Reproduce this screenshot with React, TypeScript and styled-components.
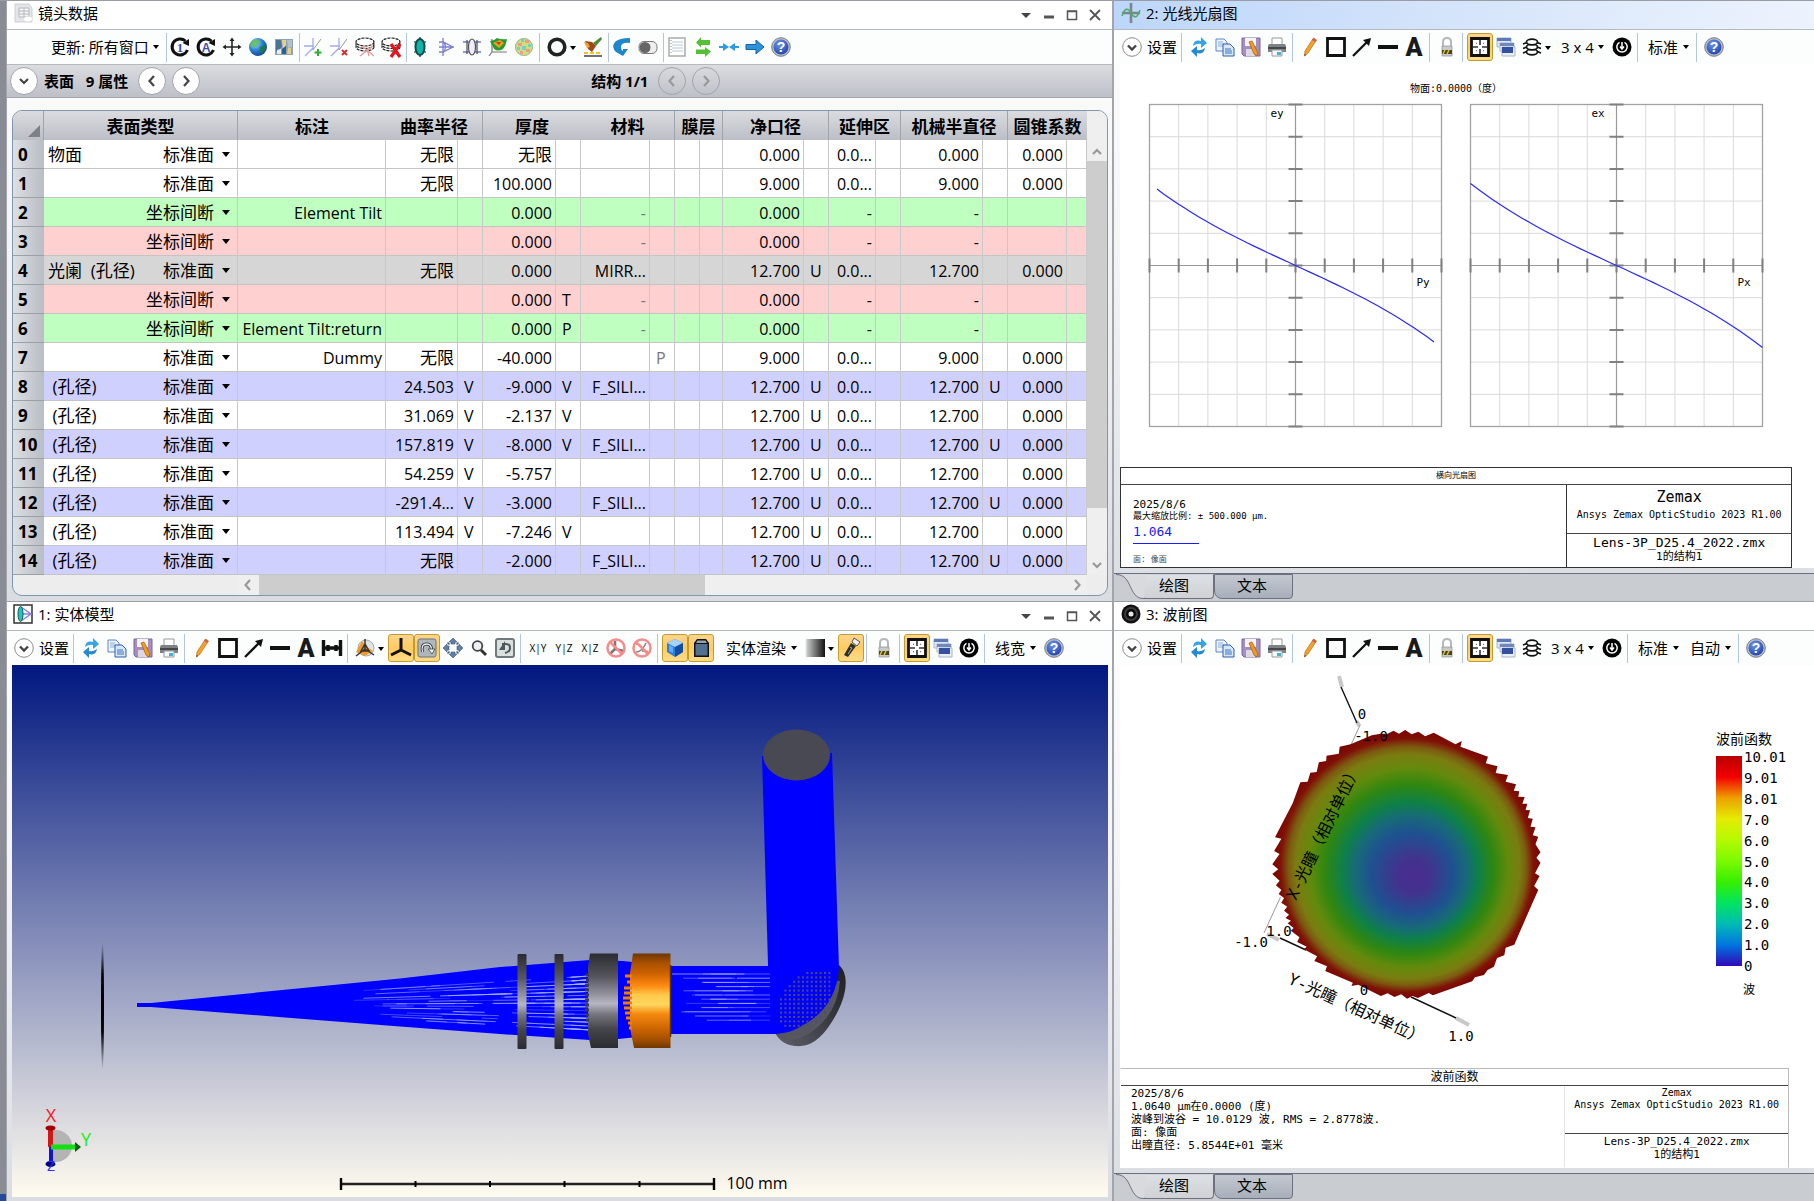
import React, { ReactNode } from "react";
import styled, { createGlobalStyle, css } from "styled-components";

const UI = '"Open Sans", "Noto Sans CJK SC", sans-serif';
const MONO = '"DejaVu Sans Mono", "Noto Sans CJK SC", monospace';

const GlobalStyle = createGlobalStyle`
  *, *::before, *::after { box-sizing: border-box; }
  body { margin: 0; background: #dfe2e7; font-family: ${UI}; font-size: 15px; line-height: 20px; color: #000; }
  button, select { font: inherit; color: inherit; }
`;

/* ---------- window shell ---------- */

const Desktop = styled.div`
  display: grid;
  grid-template-columns: 7px minmax(0, 1107fr) minmax(0, 700fr);
  grid-template-rows: auto minmax(0, 1fr);
  min-height: 100vh;
  border-top: 1px solid #9b9da5;
`;

const Strip = styled.div`
  grid-row: 1 / 3;
  background: linear-gradient(to top, #27489a 7px, #898b95 7px);
  border-right: 1px solid #a3a5ad;
`;

const Panel = styled.section<{ $divider?: boolean }>`
  display: flex;
  flex-direction: column;
  min-width: 0;
  background: linear-gradient(#fdfdfd, #f4f5f7 40%, #d9dde2);
  ${(p) => p.$divider && css`border-right: 2px solid #a3a5aa;`}
`;

const TitleBar = styled.header<{ $active?: boolean; $plot?: boolean }>`
  display: flex;
  align-items: center;
  gap: 5px;
  height: 29px;
  flex: none;
  padding: 0 8px 4px ${(p) => (p.$plot ? 7 : 6)}px;
  border-bottom: 1px solid #b6b9be;
  background: ${(p) => (p.$active ? "linear-gradient(100deg, #bcd6fb, #d3e3fa 45%, #edf3fd)" : "#fff")};
`;

const Title = styled.h2`
  margin: 0;
  flex: 1;
  font-size: 15px;
  font-weight: 400;
  line-height: 20px;
`;

const WindowButton = styled.button`
  display: flex;
  width: 23px;
  height: 20px;
  margin: 4px 0 0;
  padding: 0;
  border: 0;
  background: none;
  align-items: center;
  justify-content: center;
`;

const WindowButtons = styled.div`
  display: flex;
  margin-right: -2px;
`;

const Toolbar = styled.div<{ $ruled?: boolean; $inset?: number }>`
  display: flex;
  align-items: center;
  flex: none;
  height: ${(p) => (p.$ruled ? 35 : 34)}px;
  padding-left: ${(p) => p.$inset ?? 7}px;
  background: #fcfdfd;
  border-bottom: ${(p) => (p.$ruled ? "1px solid #b6b9be" : "0")};
  white-space: nowrap;
`;

const Sep = styled.span<{ $tight?: boolean }>`
  width: 1px;
  height: 29px;
  margin: 0 ${(p) => (p.$tight ? 0 : 4)}px 0 2px;
  background: #b3c6dd;
  flex: none;
`;

const IconButton = styled.button<{ $on?: boolean; $menu?: boolean }>`
  position: relative;
  display: flex;
  flex: none;
  align-items: center;
  justify-content: center;
  width: ${(p) => (p.$menu ? 36 : 26)}px;
  height: 28px;
  padding: 0 ${(p) => (p.$menu ? 10 : 0)}px 0 0;
  border: 1px solid ${(p) => (p.$on ? "#c29b29" : "transparent")};
  border-radius: 3px;
  background: ${(p) => (p.$on ? "linear-gradient(#fbd490, #ffcb62 50%, #ffdb8a)" : "none")};
  ${(p) =>
    p.$menu &&
    css`
      &::after {
        content: "";
        position: absolute;
        right: 3px;
        top: 12px;
        border: 3px solid transparent;
        border-top: 4px solid #000;
        border-bottom: 0;
      }
    `}
`;

const AxisButton = styled.button`
  width: 26px;
  height: 28px;
  padding: 0;
  border: 0;
  background: none;
  font-size: 10px;
  line-height: 28px;
  text-align: center;
`;

const SettingsButton = styled.button`
  display: flex;
  align-items: center;
  gap: 5px;
  margin-right: 2px;
  padding: 0;
  border: 0;
  background: none;
`;

const SelectWrap = styled.span<{ $lead?: number; $cell?: boolean }>`
  position: relative;
  display: inline-flex;
  flex: none;
  padding-left: ${(p) => p.$lead ?? 6}px;
  &::after {
    content: "";
    position: absolute;
    right: ${(p) => (p.$cell ? 4 : 5)}px;
    top: ${(p) => (p.$cell ? 10 : 9)}px;
    border: ${(p) => (p.$cell ? 4 : 3)}px solid transparent;
    border-top: ${(p) => (p.$cell ? 5 : 4)}px solid #000;
    border-bottom: 0;
    pointer-events: none;
  }
`;

const Select = styled.select<{ $cell?: boolean }>`
  appearance: none;
  border: 0;
  margin: 0;
  padding: 0 ${(p) => (p.$cell ? 20 : 15)}px 0 0;
  background: none;
  font-size: ${(p) => (p.$cell ? 17 : 15)}px;
  line-height: ${(p) => (p.$cell ? 26 : 22)}px;
`;

const Drop = ({ label, value, lead }: { label: string; value: string; lead?: number }) => (
  <SelectWrap $lead={lead}>
    <Select aria-label={label} defaultValue={value}>
      <option>{value}</option>
    </Select>
  </SelectWrap>
);

/* ---------- icons ---------- */

const blueArrow = "#2b93dc";

const glyphs: Record<string, ReactNode> = {
  cycle1: (
    <>
      <path d="M15.5 4A8 8 0 1 0 17.5 13" fill="none" stroke="#111" strokeWidth="3" />
      <path d="M12.500 6l6.500-4v7z" fill="#111" />
      <text x="10" y="14.500" fontSize="13" fontWeight="700" textAnchor="middle" fill="#3d4fa8" fontFamily="Liberation Serif">1</text>
    </>
  ),
  cycleA: (
    <>
      <path d="M15.5 4A8 8 0 1 0 17.5 13" fill="none" stroke="#111" strokeWidth="3" />
      <path d="M12.500 6l6.500-4v7z" fill="#111" />
      <text x="10" y="14.500" fontSize="12" fontWeight="700" textAnchor="middle" fill="#3d4fa8" fontFamily="Liberation Sans">A</text>
    </>
  ),
  cross: (
    <path d="M9.200 4H7.500L10 .5 12.500 4h-1.700v5.200H16V7.500l3.500 2.500-3.500 2.500v-1.700h-5.200V16h1.700L10 19.500 7.500 16h1.700v-5.200H4v1.700L.5 10 4 7.500v1.700h5.200z" fill="#222" />
  ),
  globe: (
    <>
      <circle cx="10" cy="10" r="9" fill="url(#globeFill)" />
      <path d="M4 4q5-3 8 0l-2 4-5 3-3-2z" fill="#62c05a" opacity=".85" />
      <path d="M12 10l5-2 1 4-4 5-2-3z" fill="#1d7a3d" opacity=".8" />
    </>
  ),
  map: (
    <>
      <path d="M1 2h18v16H1z" fill="#8ba3b5" />
      <path d="M2 3h5l1 7-6 5z" fill="#4a7396" />
      <path d="M8 3h4v5l-3 4zM14 11h3v6h-4z" fill="#e6d08a" />
      <path d="M13 3h5v7l-4 1z" fill="#b4c0c6" />
      <path d="M3 13l4-1v5H3z" fill="#e9edf0" />
      <path d="M8 12l4-3v8H8z" fill="#2f5f86" />
    </>
  ),
  axisAdd: (
    <>
      <path d="M10 1v12M1 9h10M10 11l-8 8" stroke="#a7a9ee" strokeWidth="1.3" fill="none" />
      <path d="M10 13L18 2" stroke="#999" strokeWidth="1" />
      <path d="M15 12v7M11.500 15.500h7" stroke="#2fae35" strokeWidth="2" />
    </>
  ),
  axisDel: (
    <>
      <path d="M10 1v12M1 9h10M10 11l-8 8" stroke="#a7a9ee" strokeWidth="1.3" fill="none" />
      <path d="M10 13L18 2" stroke="#999" strokeWidth="1" />
      <path d="M13 13l5 5M18 13l-5 5" stroke="#c33" strokeWidth="2" />
    </>
  ),
  stackRays: (
    <>
      <g fill="#fff" stroke="#222" strokeWidth="1.200" strokeDasharray="3 1">
        <ellipse cx="10" cy="10" rx="9" ry="4" />
        <ellipse cx="10" cy="7.500" rx="9" ry="4" />
        <ellipse cx="10" cy="5" rx="9" ry="4" />
      </g>
      <path d="M7 9l12 10M18 9L5 19M12 12l2 7" stroke="#e79a9a" strokeWidth="1.300" />
    </>
  ),
  stackDel: (
    <>
      <g fill="#fff" stroke="#222" strokeWidth="1.200" strokeDasharray="3 1">
        <ellipse cx="10" cy="10" rx="9" ry="4" />
        <ellipse cx="10" cy="7.500" rx="9" ry="4" />
        <ellipse cx="10" cy="5" rx="9" ry="4" />
      </g>
      <path d="M10 7l9 13M19 7l-9 13" stroke="#e3141b" strokeWidth="3.200" />
    </>
  ),
  lensSolid: (
    <>
      <path d="M10 0v20M4 5h3v10H4M16 5h-3M13 15h3" stroke="#222" strokeWidth="1.200" fill="none" />
      <ellipse cx="10" cy="10" rx="4.500" ry="8" fill="#10b5a8" stroke="#0c4c48" strokeWidth="2" />
    </>
  ),
  lensRays: (
    <path d="M7 1v18M3 5h4l10 5-10 5H3M3 10h15M7 4q5 6 0 12" fill="none" stroke="#7b7fd0" strokeWidth="1.300" />
  ),
  lensFrame: (
    <>
      <path d="M1 5h18M1 15h18" stroke="#7078c4" strokeWidth="1.500" />
      <ellipse cx="10" cy="10" rx="3.500" ry="8" fill="#eef" stroke="#555" strokeWidth="1.200" />
      <path d="M5 3v14M15 3v14" stroke="#555" strokeWidth="1.300" />
    </>
  ),
  surface3d: (
    <>
      <path d="M4 2v13h15M4 15l-3 4" stroke="#777" strokeWidth="1.200" fill="none" />
      <path d="M2 4q4 0 7-3 4 2 10 1-1 7-4 10-5 3-9 0z" fill="#2c9a32" />
      <path d="M5 6l7-3 4 3-5 5z" fill="#e0a51c" />
      <path d="M8 5l5 0-2 3z" fill="#d6331c" />
    </>
  ),
  spot: (
    <>
      <circle cx="10" cy="10" r="9" fill="#cfe07a" />
      <path d="M4 6h4v3H4zM11 3h4v3h-4zM12 12h4v3h-4zM6 14h3v3H6z" fill="#f09a8e" />
      <path d="M8 9h4v4H8zM3 10h3v3H3zM14 7h3v3h-3zM7 2h3v3H7z" fill="#78cfc3" />
      <circle cx="10" cy="10" r="8.500" fill="none" stroke="#9db89a" />
    </>
  ),
  ring: <circle cx="10" cy="10" r="7.800" fill="none" stroke="#222" strokeWidth="3.600" />,
  brush: (
    <>
      <path d="M18 0l-8 6 3 3 6-7z" fill="#4f8a35" />
      <path d="M2 4l7 1 4 4-4 6-4-3z" fill="#9a4a18" />
      <path d="M1 5l4 1 2 4-3 1z" fill="#f0a13a" />
      <path d="M1 16h18" stroke="#f1c232" strokeWidth="2" strokeDasharray="4 2" />
      <path d="M1 19h18" stroke="#222" strokeWidth="1.300" />
    </>
  ),
  undo: <path d="M18 1v5q-9-1-9 4 0 3 2 4v-2h5l-5 7-7-4q-5-5-1-10 4-4 15-4z" fill="#1f86c9" />,
  toggle: (
    <>
      <rect x="1" y="4.500" width="18" height="12" rx="5" fill="#eee" stroke="#777" />
      <circle cx="7" cy="10.500" r="5.500" fill="#666" />
    </>
  ),
  sheet: (
    <>
      <path d="M2 1h16v18H2z" fill="#fff" stroke="#aaa" strokeWidth="1.500" />
      <path d="M5 5h11M5 8h11M5 11h11M5 14h11" stroke="#b9c6d8" />
      <path d="M4 3v14" stroke="#888" strokeDasharray="1 2" />
    </>
  ),
  swap: (
    <path d="M8 0v3h9v5H8v2.500L3 5.500zM12 10v2.500H3v4.500h9v3l6-5.500z" fill="#55bf35" />
  ),
  inward: (
    <path d="M0 9h4V6l6 4-6 4v-3H0zM20 9h-4V6l-6 4 6 4v-3h4z" fill="#2b9be8" />
  ),
  right: <path d="M1 7.500h10V3l8 7-8 7v-4.500H1z" fill={blueArrow} stroke="#1463a5" />,
  help: (
    <>
      <circle cx="10" cy="10" r="9.300" fill="#b8bdc8" stroke="#777c88" />
      <circle cx="10" cy="10" r="7.500" fill="url(#helpFill)" />
      <text x="10" y="15" fontSize="14" fontWeight="700" textAnchor="middle" fill="#fff" fontFamily="Liberation Sans">?</text>
    </>
  ),
  refresh: (
    <>
      <path d="M4 9Q5 2 12 4V0l6 6-6 5V7Q8 6 4 9z" fill="#35a3e4" />
      <path d="M16 11q-1 7-8 5v4l-6-6 6-5v4q4 1 8-2z" fill="#2389d4" />
    </>
  ),
  copy: (
    <>
      <path d="M1 2h8l3 3v9H1z" fill="#eef4fd" stroke="#5b86c4" />
      <path d="M3 5h5M3 7h6M3 9h6" stroke="#8db0de" />
      <path d="M8 7h7l4 4v8H8z" fill="#d8e6fa" stroke="#2c5fae" />
      <path d="M10 12h6M10 14h7M10 16h7" stroke="#3f74bf" />
    </>
  ),
  save: (
    <>
      <path d="M1 1h18v18H3l-2-2z" fill="#a58fc0" stroke="#7b679b" />
      <path d="M4 1h11v8H4z" fill="#f5f2f8" />
      <path d="M5 12h9v7H5z" fill="#ddd8e4" />
      <path d="M8 5l3-1 6 12-1 3-3-2z" fill="#f39a1e" stroke="#9b5d10" strokeWidth=".7" />
    </>
  ),
  print: (
    <>
      <path d="M5 1h10v7H5z" fill="#fff" stroke="#999" />
      <path d="M2 7h16l1 2v6H1V9z" fill="#7d8286" />
      <path d="M1 11h18" stroke="#45494c" strokeWidth="2" />
      <path d="M5 13h10v6H5z" fill="#f5fafd" stroke="#999" />
      <path d="M10 15h4v3h-4z" fill="#4fb0c9" />
    </>
  ),
  pencil: (
    <>
      <path d="M13.500 1l3 2L8 16l-3.500 3 .5-5z" fill="#f5a22b" stroke="#b06b14" strokeWidth=".7" />
      <path d="M13.500 1l3 2-1.500 2-3-2z" fill="#d65f4b" />
      <path d="M4.500 19l.3-2 1.200 1z" fill="#333" />
    </>
  ),
  rect: <path d="M1.500 1.500h17v17h-17z" fill="#fff" stroke="#111" strokeWidth="2.800" />,
  arrow: (
    <>
      <path d="M1 19L16 4" stroke="#111" strokeWidth="2.300" />
      <path d="M11 3l8-2-2 8z" fill="#111" />
    </>
  ),
  line: <path d="M0 10h20" stroke="#111" strokeWidth="4" />,
  letter: <text x="10" y="18.500" fontSize="25" fontWeight="900" textAnchor="middle" fill="#1a1a1a" fontFamily="Roboto">A</text>,
  measure: <path d="M1.500 2v16M18.500 2v16M2 10h16M6 7v6M14 7v6" stroke="#111" strokeWidth="3.400" />,
  orbit: (
    <>
      <circle cx="11" cy="10" r="8" fill="#e2e2e2" stroke="#aaa" />
      <path d="M1 14L7 3l5 6 6 4-8 5z" fill="#ef9b2c" />
      <path d="M10 1v10l-9 7M10 11l9 6M6 13l4-7 4 7z" stroke="#333" strokeWidth="1.500" fill="none" />
    </>
  ),
  triad: <path d="M10 0v12M10 12L0 17M10 12l10 5" stroke="#111" strokeWidth="3" />,
  rotate: (
    <>
      <rect x="1" y="1" width="18" height="18" rx="2" fill="#aeb8bb" stroke="#6a757a" />
      <path d="M5.500 14q-2-8 4.500-8 4.500 0 4.500 6" fill="none" stroke="#333" strokeWidth="3" />
      <path d="M5.500 14q-2-8 4.500-8 4.500 0 4.500 6" fill="none" stroke="#e8eef0" strokeWidth="1.300" />
      <path d="M11 11h7l-3 5z" fill="#e8eef0" stroke="#444" strokeWidth=".8" />
    </>
  ),
  move: (
    <g fill="#5f7fa3" stroke="#3e5a78" strokeWidth=".6">
      <path d="M10 0l4 4h-2v2H8V4H6zM10 20l4-4h-2v-2H8v2H6zM0 10l4-4v2h2v4H4v2zM20 10l-4-4v2h-2v4h2v2z" />
      <path d="M4.500 4.500l2 2M15.500 4.500l-2 2M4.500 15.500l2-2M15.500 15.500l-2-2" strokeWidth="1.500" />
    </g>
  ),
  search: (
    <>
      <circle cx="8.500" cy="8" r="4.800" fill="#eef1f4" stroke="#444" strokeWidth="1.800" />
      <path d="M12 12l5 5" stroke="#333" strokeWidth="3" />
    </>
  ),
  reset: (
    <>
      <rect x="1" y="1" width="18" height="18" rx="2" fill="#dbe0df" stroke="#6f7a7c" strokeWidth="2" />
      <path d="M7 6h4q4 0 4 4t-5 5" fill="none" stroke="#4c5a5e" strokeWidth="2" />
      <path d="M10 3v9H4z" fill="#4c5a5e" />
    </>
  ),
  noAxis: (
    <>
      <path d="M9 3v8l-5 5M9 11l9 2" stroke="#777" strokeWidth="2.600" fill="none" />
      <circle cx="10" cy="10" r="8.500" fill="none" stroke="#f78c8c" strokeWidth="2.500" />
      <path d="M4 4l12 12" stroke="#f78c8c" strokeWidth="2.500" />
    </>
  ),
  noRays: (
    <>
      <path d="M4 6q6 0 7 8M4 14q6 0 10-9M12 12l4 2" stroke="#888" strokeWidth="1.600" fill="none" />
      <circle cx="10" cy="10" r="8.500" fill="none" stroke="#f78c8c" strokeWidth="2.500" />
      <path d="M4 4l12 12" stroke="#f78c8c" strokeWidth="2.500" />
    </>
  ),
  cube: (
    <>
      <path d="M10 1l8 4v9l-8 5-8-5V5z" fill="#2b7fe0" />
      <path d="M10 1l8 4-8 4-8-4z" fill="#a7d2fa" />
      <path d="M10 9l8-4v9l-8 5z" fill="#124f9e" />
      <path d="M4 7l4 2v6l-4-2z" fill="#64abf3" />
    </>
  ),
  cylinder: (
    <>
      <path d="M3 5l3-4h9l3 4v14H3z" fill="#111" />
      <path d="M4.500 6h12v11.500h-12z" fill="#52708f" />
      <path d="M6.500 2.500h8l1.500 2.500H5z" fill="#8fa5ba" />
    </>
  ),
  gradient: <rect x="0" y="1" width="20" height="18" fill="url(#swatchFill)" />,
  torch: (
    <>
      <path d="M13 0l6 4-3 4-5-4z" fill="#eef0f0" stroke="#555" />
      <path d="M10 5l5 3-8 11-4-2z" fill="#2d2d2d" />
      <path d="M9 9l2 1-4 6" stroke="#aaa" fill="none" />
    </>
  ),
  lock: (
    <>
      <path d="M6 10V5q0-4 4-4t4 4v5" fill="none" stroke="#b5b9bc" strokeWidth="2" />
      <path d="M5 9h10v10H5z" fill="#c5cacd" stroke="#999" strokeWidth=".8" />
      <path d="M5 13h10v4H5z" fill="#4a4320" />
      <path d="M6 17l2-4M10 17l2-4" stroke="#e6c32a" strokeWidth="1.500" />
    </>
  ),
  fit: (
    <>
      <path d="M1.500 1.500h17v17h-17z" fill="#fff" stroke="#111" strokeWidth="2.800" />
      <path d="M10 3v5M10 12v5M3 10h5M12 10h5" stroke="#333" strokeWidth="1.600" fill="none" />
      <path d="M6.500 7V6H7M13.500 7V6H13M6.500 13v1H7M13.500 13v1H13" stroke="#777" fill="none" />
    </>
  ),
  windows: (
    <>
      <path d="M1 1h14v9H1z" fill="#dfe6f2" stroke="#a9b6ca" />
      <path d="M1 1h14v3H1z" fill="#5d79b8" />
      <path d="M4 6h14v8H4z" fill="#f1f4fa" stroke="#a9b6ca" />
      <path d="M4 6h14v3H4z" fill="#6f88c0" />
      <path d="M6 10h13v9H6z" fill="#e8edf6" stroke="#a9b6ca" />
      <path d="M6 10h11v6H6z" fill="#3450a2" />
    </>
  ),
  layers: (
    <g fill="#fff" stroke="#111" strokeWidth="1.700">
      <path d="M1 16l5-2M19 16l-5-2M1 11.500l5-2M19 11.500l-5-2M1 7l5-2M19 7l-5-2" />
      <ellipse cx="10" cy="15" rx="5.500" ry="2.800" />
      <ellipse cx="10" cy="10" rx="5.500" ry="2.800" />
      <ellipse cx="10" cy="5" rx="5.500" ry="2.800" />
    </g>
  ),
  clock: (
    <>
      <circle cx="10" cy="10" r="9.500" fill="#000" />
      <path d="M7.500 5.300a5.200 5.200 0 1 0 5 0" fill="none" stroke="#fff" strokeWidth="1.500" />
      <path d="M10 5v6M8 9.500l2 2.500 2-2.500" fill="none" stroke="#fff" strokeWidth="1.500" />
    </>
  ),
  chevron: (
    <>
      <circle cx="10" cy="10" r="9.300" fill="#fff" stroke="#8c8c8c" />
      <path d="M6 8.500l4 4 4-4" fill="none" stroke="#444" strokeWidth="2.400" />
    </>
  ),
  doc: (
    <>
      <path d="M2 1h14l3 4v14H2z" fill="#e3e5e8" stroke="#cdd0d4" />
      <path d="M6 5h10v9H6zM6 8h10M6 11h10M11 5v9" fill="#f4f5f6" stroke="#b5b9be" />
      <ellipse cx="15" cy="16" rx="4" ry="2.500" fill="#fff" />
    </>
  ),
  model: (
    <>
      <path d="M1 1h18v18H1z" fill="#fff" stroke="#333" strokeWidth="1.500" />
      <path d="M8 3l10 7-10 7M8 10h10" fill="none" stroke="#8d80e8" strokeWidth="1.500" />
      <ellipse cx="7.500" cy="10" rx="2.500" ry="7.500" fill="#1fc7b9" stroke="#135e5a" />
    </>
  ),
  fan: (
    <>
      <path d="M10 0v20M1 10h18" stroke="#7a8590" strokeWidth="2.600" />
      <path d="M1 13q4-12 9-3t9-3" fill="none" stroke="#4fae5c" strokeWidth="1.500" />
    </>
  ),
  airy: (
    <>
      <circle cx="10" cy="10" r="9.500" fill="#111" />
      <circle cx="10" cy="10" r="7" fill="#3c3c3c" />
      <circle cx="10" cy="10" r="5" fill="#0a0a0a" />
      <circle cx="10" cy="10" r="2.500" fill="#e8e8e8" />
    </>
  ),
};

const Glyph = styled.svg.attrs({ viewBox: "0 0 20 20", "aria-hidden": true })`
  width: 20px;
  height: 20px;
  flex: none;
  overflow: visible;
`;

const SharedDefs = styled.svg`
  position: absolute;
  width: 0;
  height: 0;
`;

const Icon = ({ name, on, menu }: { name: string; on?: boolean; menu?: boolean }) => (
  <IconButton type="button" aria-label={name} $on={on} $menu={menu}>
    <Glyph>{glyphs[name]}</Glyph>
  </IconButton>
);

const Icons = ({ names }: { names: string[] }) => (
  <>{names.map((n) => <Icon key={n} name={n} />)}</>
);

const Settings = () => (
  <SettingsButton type="button">
    <Glyph>{glyphs.chevron}</Glyph>设置
  </SettingsButton>
);

const Controls = () => (
  <WindowButtons>
    <WindowButton type="button" aria-label="menu">
      <svg width="12" height="12"><path d="M1 4h10L6 9z" fill="#444" /></svg>
    </WindowButton>
    <WindowButton type="button" aria-label="minimize">
      <svg width="12" height="12"><path d="M1 8h10" stroke="#555" strokeWidth="3" /></svg>
    </WindowButton>
    <WindowButton type="button" aria-label="maximize">
      <svg width="12" height="12"><path d="M1.500 2h9v8.500h-9zM1 2.500h10" fill="none" stroke="#555" strokeWidth="1.500" /></svg>
    </WindowButton>
    <WindowButton type="button" aria-label="close">
      <svg width="12" height="12"><path d="M1 1l10 10M11 1L1 11" stroke="#555" strokeWidth="1.800" /></svg>
    </WindowButton>
  </WindowButtons>
);

/* ---------- lens data editor ---------- */

const PropertyBar = styled.div`
  display: flex;
  align-items: center;
  flex: none;
  height: 33px;
  padding-left: 3px;
  background: linear-gradient(#dadce0, #bdc0c7);
  border-bottom: 1px solid #a4a7ad;
  font-weight: 700;
`;

const BarText = styled.span<{ $lead?: number }>`
  margin: 0 10px 0 ${(p) => p.$lead ?? 0}px;
  white-space: pre;
`;

const RoundButton = styled.button<{ $muted?: boolean }>`
  display: flex;
  align-items: center;
  justify-content: center;
  width: 28px;
  height: 28px;
  margin-right: 6px;
  padding: 0;
  border: 1px solid #a2a4a9;
  border-radius: 50%;
  background: ${(p) => (p.$muted ? "transparent" : "#fff")};
  color: ${(p) => (p.$muted ? "#999" : "#444")};
`;

const Chevron = ({ d }: { d: string }) => (
  <svg width="12" height="12" viewBox="0 0 12 12" aria-hidden="true">
    <path d={d} fill="none" stroke="currentColor" strokeWidth="2.200" />
  </svg>
);

const EditorBody = styled.div`
  flex: 1;
  padding: 12px 4px 5px 5px;
  background: linear-gradient(#fafafa, #eef0f2 50%, #d9dde2);
  border-bottom: 1px solid #9c9fa6;
`;

const Frame = styled.div`
  border: 1px solid #7d97ae;
  border-radius: 10px;
  overflow: hidden;
  background: #ededed;
`;

const FrameRow = styled.div`
  display: flex;
`;

const Grid = styled.table`
  flex: 1;
  min-width: 0;
  table-layout: fixed;
  border-collapse: separate;
  border-spacing: 0;
  font-size: 16px;
`;

const HeadCell = styled.th<{ $rule?: boolean }>`
  height: 29px;
  padding: 2px 0 0;
  background: linear-gradient(#dadce0, #bbbec5);
  border-right: ${(p) => (p.$rule ? "1px solid #9fa3aa" : "0")};
  font-size: 17px;
  font-weight: 700;
  line-height: 26px;
  white-space: nowrap;
  overflow: hidden;
`;

const CornerCell = styled(HeadCell)`
  text-align: right;
  vertical-align: bottom;
  & svg { display: block; margin: 0 3px 3px auto; }
`;

const RowHead = styled.th`
  height: 29px;
  padding: 2px 0 0 5px;
  background: linear-gradient(90deg, #dcdfe3, #b9bdc4);
  border-bottom: 1px solid #9ca1a8;
  font-size: 17px;
  font-weight: 700;
  line-height: 26px;
  text-align: left;
`;

const tones: Record<string, string> = {
  w: "#ffffff",
  g: "#bfffbf",
  r: "#ffd0d0",
  s: "#d6d6d6",
  b: "#d0d0ff",
};

const Row = styled.tr<{ $tone: string }>`
  background: ${(p) => tones[p.$tone]};
`;

const Cell = styled.td<{ $flag?: boolean; $dim?: boolean; $text?: boolean }>`
  height: 29px;
  padding: 2px ${(p) => (p.$flag ? 0 : 3)}px 0 ${(p) => (p.$flag ? 6 : 0)}px;
  border-right: 1px solid #c9c9c9;
  border-bottom: 1px solid #c4c4c4;
  color: ${(p) => (p.$dim ? "#777" : "#000")};
  font-size: ${(p) => (p.$text ? 17 : 16)}px;
  line-height: 26px;
  text-align: ${(p) => (p.$flag ? "left" : "right")};
  white-space: nowrap;
  overflow: hidden;
`;

const TypeBox = styled.div`
  display: flex;
  justify-content: space-between;
  height: 26px;
  padding-left: 4px;
  font-size: 17px;
  white-space: pre;
`;

const VScroll = styled.div`
  display: flex;
  flex-direction: column;
  align-items: center;
  justify-content: space-between;
  width: 20px;
  flex: none;
  padding: 35px 0 4px;
  color: #999;
  background: linear-gradient(#cdcdcd, #cdcdcd) 0 50px / 20px 347px no-repeat, #efefef;
`;

const HScroll = styled.div`
  display: flex;
  align-items: center;
  justify-content: space-between;
  flex: 1;
  height: 20px;
  margin-left: 225px;
  margin-right: 20px;
  padding: 0 4px;
  color: #999;
  background: linear-gradient(90deg, transparent 21px, #cdcdcd 21px, #cdcdcd 55%, transparent 55%), #efefef;
`;

const widths = [31, 194, 148, 72, 25, 73, 25, 69, 25, 25, 23, 81, 25, 47, 25, 82, 25, 59, 20];

type Surface = [string, string, string, string, string, string, string, string, string, string, string, string, string, string, string];
const std = "标准面";
const brk = "坐标间断";
/* tone, note, type, comment, radius, flag, thickness, flag, material, flag, clear, flag, chip, mechanical, flag */
const surfaces: Surface[] = [
  ["w", "物面", std, "", "无限", "", "无限", "", "", "", "0.000", "", "0.0...", "0.000", ""],
  ["w", "", std, "", "无限", "", "100.000", "", "", "", "9.000", "", "0.0...", "9.000", ""],
  ["g", "", brk, "Element Tilt", "", "", "0.000", "", "-", "", "0.000", "", "-", "-", ""],
  ["r", "", brk, "", "", "", "0.000", "", "-", "", "0.000", "", "-", "-", ""],
  ["s", "光阑  (孔径)", std, "", "无限", "", "0.000", "", "MIRR...", "", "12.700", "U", "0.0...", "12.700", ""],
  ["r", "", brk, "", "", "", "0.000", "T", "-", "", "0.000", "", "-", "-", ""],
  ["g", "", brk, "Element Tilt:return", "", "", "0.000", "P", "-", "", "0.000", "", "-", "-", ""],
  ["w", "", std, "Dummy", "无限", "", "-40.000", "", "", "P", "9.000", "", "0.0...", "9.000", ""],
  ["b", " (孔径)", std, "", "24.503", "V", "-9.000", "V", "F_SILI...", "", "12.700", "U", "0.0...", "12.700", "U"],
  ["w", " (孔径)", std, "", "31.069", "V", "-2.137", "V", "", "", "12.700", "U", "0.0...", "12.700", ""],
  ["b", " (孔径)", std, "", "157.819", "V", "-8.000", "V", "F_SILI...", "", "12.700", "U", "0.0...", "12.700", "U"],
  ["w", " (孔径)", std, "", "54.259", "V", "-5.757", "", "", "", "12.700", "U", "0.0...", "12.700", ""],
  ["b", " (孔径)", std, "", "-291.4...", "V", "-3.000", "", "F_SILI...", "", "12.700", "U", "0.0...", "12.700", "U"],
  ["w", " (孔径)", std, "", "113.494", "V", "-7.246", "V", "", "", "12.700", "U", "0.0...", "12.700", ""],
  ["b", " (孔径)", std, "", "无限", "", "-2.000", "", "F_SILI...", "", "12.700", "U", "0.0...", "12.700", "U"],
];

const isText = (v: string) => v === "无限";

const LensTable = () => (
  <Grid>
    <colgroup>
      {widths.map((w, i) => <col key={i} style={{ width: w }} />)}
    </colgroup>
    <thead>
      <tr>
        <CornerCell $rule>
          <svg width="12" height="12"><path d="M12 0v12H0z" fill="#7d8087" /></svg>
        </CornerCell>
        <HeadCell $rule>表面类型</HeadCell>
        <HeadCell>标注</HeadCell>
        <HeadCell $rule colSpan={2}>曲率半径</HeadCell>
        <HeadCell colSpan={2}>厚度</HeadCell>
        <HeadCell $rule colSpan={2}>材料</HeadCell>
        <HeadCell $rule colSpan={2}>膜层</HeadCell>
        <HeadCell $rule colSpan={2}>净口径</HeadCell>
        <HeadCell $rule colSpan={2}>延伸区</HeadCell>
        <HeadCell $rule colSpan={2}>机械半直径</HeadCell>
        <HeadCell colSpan={2}>圆锥系数</HeadCell>
      </tr>
    </thead>
    <tbody>
      {surfaces.map(([tone, note, type, comment, rad, rf, th, tf, mat, mf, clear, cf, chip, mech, hf], i) => (
        <Row key={i} $tone={tone}>
          <RowHead scope="row">{i}</RowHead>
          <Cell>
            <TypeBox>
              <span>{note}</span>
              <SelectWrap $cell>
                <Select $cell aria-label={`surface ${i} type`} defaultValue={type}>
                  <option>{type}</option>
                </Select>
              </SelectWrap>
            </TypeBox>
          </Cell>
          <Cell>{comment}</Cell>
          <Cell $text={isText(rad)}>{rad}</Cell>
          <Cell $flag>{rf}</Cell>
          <Cell $text={isText(th)}>{th}</Cell>
          <Cell $flag>{tf}</Cell>
          <Cell $dim={mat === "-"}>{mat}</Cell>
          <Cell $flag $dim>{mf}</Cell>
          <Cell />
          <Cell />
          <Cell>{clear}</Cell>
          <Cell $flag>{cf}</Cell>
          <Cell>{chip}</Cell>
          <Cell />
          <Cell>{mech}</Cell>
          <Cell $flag>{hf}</Cell>
          <Cell>{type === brk ? "" : "0.000"}</Cell>
          <Cell />
        </Row>
      ))}
    </tbody>
  </Grid>
);

const LensEditor = () => (
  <Panel $divider>
    <TitleBar>
      <Glyph>{glyphs.doc}</Glyph>
      <Title>镜头数据</Title>
      <Controls />
    </TitleBar>
    <Toolbar $ruled $inset={36}>
      <Drop label="更新" value="更新: 所有窗口" lead={8} />
      <Sep $tight />
      <Icons names={["cycle1", "cycleA", "cross", "globe", "map"]} />
      <Sep $tight />
      <Icons names={["axisAdd", "axisDel", "stackRays", "stackDel"]} />
      <Sep $tight />
      <Icons names={["lensSolid", "lensRays", "lensFrame", "surface3d", "spot"]} />
      <Sep />
      <Icon name="ring" menu />
      <Icon name="brush" />
      <Sep $tight />
      <Icons names={["undo", "toggle"]} />
      <Sep $tight />
      <Icons names={["sheet", "swap", "inward", "right", "help"]} />
    </Toolbar>
    <PropertyBar>
      <RoundButton type="button" aria-label="expand"><Chevron d="M2 4l4 4 4-4" /></RoundButton>
      <BarText>{"表面   9 属性"}</BarText>
      <RoundButton type="button" aria-label="previous surface"><Chevron d="M8 1L3.500 6 8 11" /></RoundButton>
      <RoundButton type="button" aria-label="next surface"><Chevron d="M4 1l4.500 5L4 11" /></RoundButton>
      <BarText $lead={385}>结构 1/1</BarText>
      <RoundButton type="button" $muted aria-label="previous configuration"><Chevron d="M8 1L3.500 6 8 11" /></RoundButton>
      <RoundButton type="button" $muted aria-label="next configuration"><Chevron d="M4 1l4.500 5L4 11" /></RoundButton>
    </PropertyBar>
    <EditorBody>
      <Frame>
        <FrameRow>
          <LensTable />
          <VScroll>
            <Chevron d="M2 8l4-4 4 4" />
            <Chevron d="M2 4l4 4 4-4" />
          </VScroll>
        </FrameRow>
        <FrameRow>
          <HScroll>
            <Chevron d="M8 1L3.500 6 8 11" />
            <Chevron d="M4 1l4.500 5L4 11" />
          </HScroll>
        </FrameRow>
      </Frame>
    </EditorBody>
  </Panel>
);

/* ---------- shaded model ---------- */

const Viewport = styled.div`
  flex: 1;
  display: flex;
  min-height: 0;
  margin: 0 4px 4px 5px;
  background: linear-gradient(#00177f, #fffbef);
`;

const Scene = styled.svg`
  flex: 1;
  width: 100%;
  min-height: 0;
`;

const noise = (i: number) => {
  const v = Math.sin(i * 12.9898) * 43758.5453;
  return v - Math.floor(v);
};

const focus = { x: 125, y: 340 };

/* gaps between rays seen as pale slivers, all aimed at the focus */
const fanGaps = Array.from({ length: 130 }, (_, i) => {
  const slope = -0.064 + 0.0085 * Math.floor(noise(i + 1) * 15);
  const near = noise(i + 50);
  const x1 = 560 - near * near * 220;
  const x2 = Math.min(x1 + 15 + noise(i + 90) * 60, 576);
  return {
    x1,
    x2,
    y1: focus.y + slope * (x1 - focus.x),
    y2: focus.y + slope * (x2 - focus.x),
    o: 0.25 + 0.65 * noise(i + 7),
  };
});

const flatGaps = Array.from({ length: 34 }, (_, i) => {
  const y = 309 + (i % 12) * 4.2;
  const x1 = 660 + noise(i + 3) * 70;
  return { y, x1, x2: Math.min(x1 + 20 + noise(i + 31) * 60, 758), o: 0.25 + 0.6 * noise(i + 17) };
});

const dots: ReactNode[] = [];
for (let r = 0; r < 13; r++) {
  for (let c = 0; c < 12; c++) {
    const x = 768 + c * 4.4;
    const y = 307 + r * 4.4;
    const u = (x - 794) * 0.75 + (y - 334) * 0.66;
    const v = (x - 794) * -0.66 + (y - 334) * 0.75;
    if ((v * v) / (36 * 36) + (u * u) / (23 * 23) < 1) {
      dots.push(<rect key={`${r}-${c}`} x={x} y={y} width="2" height="2" />);
    }
  }
}

const ModelScene = () => (
  <Scene viewBox="0 0 1096 532" preserveAspectRatio="xMidYMid meet" role="img" aria-label="实体模型">
    <defs>
      <linearGradient id="steel" x1="0" y1="0" x2="0" y2="1">
        <stop offset="0" stopColor="#2b2c31" />
        <stop offset=".25" stopColor="#55565e" />
        <stop offset=".42" stopColor="#8e8f99" />
        <stop offset=".53" stopColor="#b6b6c3" />
        <stop offset=".64" stopColor="#77777f" />
        <stop offset=".8" stopColor="#44454b" />
        <stop offset="1" stopColor="#2b2c31" />
      </linearGradient>
      <linearGradient id="amber" x1="0" y1="0" x2="0" y2="1">
        <stop offset="0" stopColor="#6e3800" />
        <stop offset=".1" stopColor="#a85000" />
        <stop offset=".22" stopColor="#d06400" />
        <stop offset=".34" stopColor="#ff8a12" />
        <stop offset=".44" stopColor="#ffca4c" />
        <stop offset=".54" stopColor="#ffd65c" />
        <stop offset=".64" stopColor="#f58a10" />
        <stop offset=".8" stopColor="#cb6400" />
        <stop offset=".93" stopColor="#9a4b00" />
        <stop offset="1" stopColor="#6e3800" />
      </linearGradient>
      <linearGradient id="rim" x1="0" y1="1" x2="1" y2="0">
        <stop offset="0" stopColor="#5e5f68" />
        <stop offset="1" stopColor="#1c1d21" />
      </linearGradient>
      <linearGradient id="sliver" x1="0" y1="0" x2="0" y2="1">
        <stop offset="0" stopColor="#000" stopOpacity="0" />
        <stop offset=".25" stopColor="#000" />
        <stop offset=".7" stopColor="#000" />
        <stop offset="1" stopColor="#000" stopOpacity="0" />
      </linearGradient>
    </defs>

    <ellipse cx="90.500" cy="341" rx="1.500" ry="64" fill="url(#sliver)" />

    <path d="M827 300C838 310 835 332 821 355S795 382 783 381 766 373 763 368z" fill="url(#rim)" />
    <path d="M763 368q10 10 24 6 38-18 41-58l-10 0-50 50z" fill="#555660" />

    <path d="M125 338h14l249-24.500 100-11.500 90-7 33 1 45 5h102l7 68H656l-50 5-28 1-90-6-100-7.500L139 342h-14z" fill="#0000ff" />
    <path d="M750 91l8 278q18 0 28-6 38-18 41-60L820 88z" fill="#0000ff" />
    <ellipse cx="784.500" cy="90" rx="33.500" ry="25.500" fill="#484953" />

    <g strokeWidth=".9">
      {fanGaps.map((g, i) => (
        <line key={i} x1={g.x1} y1={g.y1} x2={g.x2} y2={g.y2} stroke="#a9b4f2" strokeOpacity={g.o} />
      ))}
      {flatGaps.map((g, i) => (
        <line key={i} x1={g.x1} y1={g.y} x2={g.x2} y2={g.y} stroke="#b4bdf0" strokeOpacity={g.o} />
      ))}
    </g>
    <g fill="#4c4d78">{dots}</g>

    <rect x="505.500" y="289" width="9" height="95" rx="1" fill="url(#steel)" />
    <rect x="542.500" y="289" width="9" height="95" rx="1" fill="url(#steel)" />
    <path d="M578 288.500h28v94.500h-27l-3-14V302z" fill="url(#steel)" />
    <path d="M577 310h-3M577 315h-3M577 320h-4M577 325h-4M577 330h-4M577 335h-4M577 340h-4M577 345h-4M577 350h-3M577 355h-3" stroke="#3b3c48" strokeWidth="3" />
    <path d="M621 288.500h37.500v94.500H622l-4-20V308z" fill="url(#amber)" />
    <path d="M620 311h-7M620 317h-5M620 323h-8M620 328h-8M620 333h-9M620 338h-9M620 343h-8M620 348h-7M620 353h-6M620 358h-4M620 363h-3" stroke="#f07c00" strokeWidth="3" />
    <path d="M658.500 300v72" stroke="#5a3200" strokeWidth="1.500" />

    <path d="M44 465a16 16 0 0 1 0 32h-4v-32z" fill="#b4b4b4" />
    <path d="M38.500 482v-20" stroke="#d01818" strokeWidth="5" />
    <ellipse cx="38.500" cy="463" rx="5" ry="2.500" fill="#a80000" />
    <path d="M39 482v16" stroke="#1414c8" strokeWidth="4" />
    <ellipse cx="38.500" cy="499" rx="5" ry="3" fill="#00007c" />
    <path d="M39 482h25" stroke="#11e011" strokeWidth="5" />
    <path d="M63 477l6 5-6 5z" fill="#0a5c0a" />
    <g fontFamily={UI} fontSize="16" textAnchor="middle">
      <text x="39" y="457" fill="#ff1414" fontSize="18">X</text>
      <text x="74" y="481" fill="#14f014" fontSize="18">Y</text>
      <text x="39" y="506" fill="#3030ff" fontSize="14">Z</text>
      <text x="745" y="524" fill="#000">100 mm</text>
    </g>
    <path d="M329 519h373" stroke="#222" strokeWidth="2.400" />
    <path d="M329 513v12M702 513v12" stroke="#000" strokeWidth="2.400" />
    <path d="M403.500 516v6M478 516v6M552.500 516v6M627.500 516v6" stroke="#000" strokeWidth="2" />
  </Scene>
);

const ModelWindow = () => (
  <Panel $divider>
    <TitleBar>
      <Glyph>{glyphs.model}</Glyph>
      <Title>1: 实体模型</Title>
      <Controls />
    </TitleBar>
    <Toolbar>
      <Settings />
      <Sep />
      <Icons names={["refresh", "copy", "save", "print"]} />
      <Sep />
      <Icons names={["pencil", "rect", "arrow", "line", "letter", "measure"]} />
      <Sep />
      <Icon name="orbit" menu />
      <Icon name="triad" on />
      <Icon name="rotate" on />
      <Icons names={["move", "search", "reset"]} />
      <Sep />
      <AxisButton type="button">X|Y</AxisButton>
      <AxisButton type="button">Y|Z</AxisButton>
      <AxisButton type="button">X|Z</AxisButton>
      <Icons names={["noAxis", "noRays"]} />
      <Sep />
      <Icon name="cube" on />
      <Icon name="cylinder" on />
      <Drop label="渲染" value="实体渲染" lead={12} />
      <Icon name="gradient" menu />
      <Icon name="torch" on />
      <Sep />
      <Icon name="lock" />
      <Sep />
      <Icon name="fit" on />
      <Icons names={["windows", "clock"]} />
      <Sep />
      <Drop label="线宽" value="线宽" />
      <Icon name="help" />
    </Toolbar>
    <Viewport>
      <ModelScene />
    </Viewport>
  </Panel>
);

/* ---------- plot windows ---------- */

const PlotArea = styled.div`
  flex: 1;
  display: flex;
  flex-direction: column;
  min-height: 0;
  margin: 0 0 5px 6px;
  background: #fff;
`;

const TabBar = styled.nav<{ $ruled?: boolean }>`
  display: flex;
  flex: none;
  height: ${(p) => (p.$ruled ? 29 : 28)}px;
  padding-left: 24px;
  background: #c9ccd1;
  border-top: 1px solid #6c7080;
  border-bottom: ${(p) => (p.$ruled ? "1px solid #9c9fa6" : "0")};
`;

const Tab = styled.button<{ $active?: boolean }>`
  position: relative;
  width: ${(p) => (p.$active ? 76 : 79)}px;
  height: 25px;
  padding: 0 3px 4px 0;
  border: 1px solid #6c7080;
  border-top-color: ${(p) => (p.$active ? "transparent" : "#6c7080")};
  border-left-width: ${(p) => (p.$active ? 0 : 1)}px;
  border-radius: 0 0 4px 8px;
  background: ${(p) => (p.$active ? "linear-gradient(#dcdfe3, #cfd1d5)" : "linear-gradient(#c3c8d0, #a8aeba)")};
  line-height: 20px;
`;

const TabCurve = styled.svg`
  position: absolute;
  left: -22px;
  top: -1px;
  width: 30px;
  height: 25px;
`;

const Tabs = ({ ruled }: { ruled?: boolean }) => (
  <TabBar $ruled={ruled}>
    <Tab type="button" $active>
      <TabCurve viewBox="0 0 30 25" aria-hidden="true">
        <path d="M0 0C16 0 12 24 28 24.500L30 0z" fill="#d8dade" />
        <path d="M0 .5C17 .5 12 24 27 24.500h3" fill="none" stroke="#6c7080" />
      </TabCurve>
      绘图
    </Tab>
    <Tab type="button">文本</Tab>
  </TabBar>
);

const PlotToolbar = ({ layersMenu, auto }: { layersMenu?: boolean; auto?: boolean }) => (
  <Toolbar $inset={8}>
    <Settings />
    <Sep />
    <Icons names={["refresh", "copy", "save", "print"]} />
    <Sep />
    <Icons names={["pencil", "rect", "arrow", "line", "letter"]} />
    <Sep />
    <Icon name="lock" />
    <Sep />
    <Icon name="fit" on />
    <Icon name="windows" />
    <Icon name="layers" menu={layersMenu} />
    <Drop label="布局" value="3 x 4" />
    <Icon name="clock" />
    <Sep />
    <Drop label="标准" value="标准" />
    {auto && <Drop label="自动" value="自动" />}
    <Sep />
    <Icon name="help" />
  </Toolbar>
);

const Caption = styled.footer<{ $bold?: boolean }>`
  display: grid;
  grid-template-columns: 447fr 224fr;
  grid-template-rows: 17px 1fr 33px;
  flex: none;
  height: ${(p) => (p.$bold ? 101 : 100)}px;
  margin-right: ${(p) => (p.$bold ? 22 : 25)}px;
  font-family: ${MONO};
  border: 1px solid ${(p) => (p.$bold ? "#333" : "#bbb")};
  border-left-color: ${(p) => (p.$bold ? "#333" : "transparent")};
  border-bottom-color: ${(p) => (p.$bold ? "#333" : "transparent")};
`;

const CaptionTitle = styled.div<{ $size: number }>`
  grid-column: 1 / 3;
  border-bottom: 1px solid #444;
  font-size: ${(p) => p.$size}px;
  line-height: 16px;
  text-align: center;
`;

const CaptionLeft = styled.div<{ $bold?: boolean }>`
  grid-row: 2 / 4;
  display: flex;
  flex-direction: column;
  align-items: flex-start;
  padding: ${(p) => (p.$bold ? "14px 12px 0" : "1px 10px 0")};
  border-right: 1px solid ${(p) => (p.$bold ? "#333" : "#e4e4e4")};
`;

const CaptionRight = styled.div<{ $rule?: boolean }>`
  display: flex;
  flex-direction: column;
  align-items: center;
  justify-content: flex-start;
  padding-top: 1px;
  overflow: hidden;
  border-bottom: ${(p) => (p.$rule ? "1px solid #444" : "0")};
`;

const Line = styled.span<{ $size: number; $lh: number; $tone?: string }>`
  font-size: ${(p) => p.$size}px;
  line-height: ${(p) => p.$lh}px;
  color: ${(p) => p.$tone ?? "#000"};
  white-space: nowrap;
`;

const WaveKey = styled.span`
  width: 66px;
  height: 12px;
  border-top: 1px solid #1a1aff;
`;

const cols = Array.from({ length: 11 }, (_, i) => i);
const cw = 29.2;
const rh = 32.2;

/* transverse error: defocus plus a cubic spherical term */
const error = (x: number) => 0.4577 * x + 4.88e-6 * x * x * x;

const fanCurve = (reach: number) =>
  Array.from({ length: 41 }, (_, i) => {
    const x = -reach + (i * reach) / 20;
    return `${(x + 146).toFixed(1)},${(error(x) + 161).toFixed(1)}`;
  }).join(" ");

const FanChart = ({ x, ex, px, reach }: { x: number; ex: string; px: string; reach: number }) => (
  <g transform={`translate(${x} 40.500)`}>
    <g stroke="#dadada">
      {cols.map((i) => <path key={i} d={`M${i * cw} 0v322M0 ${i * rh}h292`} />)}
    </g>
    <rect width="292" height="322" fill="none" stroke="#a2a2a2" strokeWidth="1.300" />
    <path d="M146 0v322M0 161h292" stroke="#999" strokeWidth="1.200" />
    <g stroke="#808080" strokeWidth="2">
      {cols.map((i) => <path key={i} d={`M139 ${i * rh}h14M${i * cw} 154v14`} />)}
    </g>
    <polyline points={fanCurve(reach)} fill="none" stroke="#2a2af5" strokeWidth="1.200" />
    <g fontSize="11">
      <text x="121" y="12">{ex}</text>
      <text x="267" y="181">{px}</text>
    </g>
  </g>
);

const FanWindow = () => (
  <Panel>
    <TitleBar $active $plot>
      <Glyph>{glyphs.fan}</Glyph>
      <Title>2: 光线光扇图</Title>
    </TitleBar>
    <PlotToolbar layersMenu />
    <PlotArea>
      <Scene viewBox="0 0 694 403" fontFamily={MONO} role="img" aria-label="光线光扇图">
        <text x="336" y="28" fontSize="10" textAnchor="middle">物面:0.0000（度）</text>
        <FanChart x={29.5} ex="ey" px="Py" reach={138.5} />
        <FanChart x={350.5} ex="ex" px="Px" reach={146} />
      </Scene>
      <Caption $bold>
        <CaptionTitle $size={8}>横向光扇图</CaptionTitle>
        <CaptionLeft $bold>
          <Line $size={11} $lh={12}>2025/8/6</Line>
          <Line $size={9} $lh={10}>最大缩放比例: ± 500.000 µm.</Line>
          <Line $size={13} $lh={22} $tone="#1a1aff">1.064</Line>
          <WaveKey />
          <Line $size={8} $lh={10} $tone="#444">面: 像面</Line>
        </CaptionLeft>
        <CaptionRight $rule>
          <Line $size={15} $lh={22}>Zemax</Line>
          <Line $size={10} $lh={14}>Ansys Zemax OpticStudio 2023 R1.00</Line>
        </CaptionRight>
        <CaptionRight>
          <Line $size={13} $lh={16}>Lens-3P_D25.4_2022.zmx</Line>
          <Line $size={11} $lh={12}>1的结构1</Line>
        </CaptionRight>
      </Caption>
    </PlotArea>
    <Tabs ruled />
  </Panel>
);

const pupilEdge =
  "519,470 543,463 590,436 610,431 625,431 638,422 650,431 664,420 678,433 693,425 708,439 727,428 775,463 789,453 786,470 847,500 842,520 868,529 864,549 891,555 886,575 909,583 904,602 916,604 914,620 928,621 923,641 934,641 930,660 940,661 935,684 946,686 941,710 952,712 946,736 958,740 952,763 963,787 954,803 963,818 951,850 961,858 949,888 958,900 905,1064 886,1073 883,1096 867,1104 860,1130 846,1140 838,1155 818,1162 812,1174 725,1216 716,1209 692,1224 680,1218 668,1226 655,1213 640,1221 625,1210 610,1218 560,1184 545,1188 548,1178 487,1143 491,1129 463,1113 469,1099 440,1078 446,1070 425,1056 430,1042 411,1022 417,1014 404,1000 411,992 399,984 407,974 396,962 403,950 390,938 396,924 384,912 390,900 378,886 386,872 370,852 383,838 370,823 386,792 374,783 390,746 376,742 415,640 432,577 448,575 454,548 468,546 473,517 489,513 490,497 517,491";

const scale = ["10.01", "9.01", "8.01", "7.0", "6.0", "5.0", "4.0", "3.0", "2.0", "1.0", "0"];

const WavefrontScene = () => (
  <Scene viewBox="0 0 694 403" fontFamily={MONO} role="img" aria-label="波前图">
    <defs>
      <radialGradient id="pupil" cx=".5" cy=".5" r=".51" fx=".53" fy=".55">
        <stop offset="0" stopColor="#482d90" />
        <stop offset=".12" stopColor="#43328e" />
        <stop offset=".3" stopColor="#1e5190" />
        <stop offset=".41" stopColor="#176a78" />
        <stop offset=".5" stopColor="#0e8048" />
        <stop offset=".62" stopColor="#308710" />
        <stop offset=".73" stopColor="#648a0c" />
        <stop offset=".82" stopColor="#7a7c10" />
        <stop offset=".87" stopColor="#7c5a10" />
        <stop offset=".925" stopColor="#7f1206" />
        <stop offset="1" stopColor="#780000" />
      </radialGradient>
      <linearGradient id="rainbow" x1="0" y1="0" x2="0" y2="1">
        <stop offset="0" stopColor="#b80000" />
        <stop offset=".1" stopColor="#f40000" />
        <stop offset=".2" stopColor="#eea000" />
        <stop offset=".3" stopColor="#e4ec00" />
        <stop offset=".4" stopColor="#b4fa00" />
        <stop offset=".5" stopColor="#7cfa00" />
        <stop offset=".6" stopColor="#36f000" />
        <stop offset=".7" stopColor="#00e460" />
        <stop offset=".8" stopColor="#00bcb4" />
        <stop offset=".9" stopColor="#0074e0" />
        <stop offset="1" stopColor="#3208b8" />
      </linearGradient>
    </defs>
    <g stroke="#c8c8c8" strokeWidth="4">
      <path d="M219 11l3 11M236.500 56l3 5M147 269l12 6M336 353l13 7" />
    </g>
    <g stroke="#999" strokeWidth="1">
      <path d="M240 60l-9 20M160.500 232L144 268" />
    </g>
    <path d="M221 22l16 36M160 273l26 12M291 332l45 21" stroke="#111" strokeWidth="1.400" />
    <polygon points={pupilEdge} transform="translate(-15 -75) scale(.4522 .3333)" fill="url(#pupil)" />
    <g fontSize="14" textAnchor="middle">
      <text x="242" y="54">0</text>
      <text x="251" y="76">-1.0</text>
      <text x="159" y="271">1.0</text>
      <text x="131" y="282">-1.0</text>
      <text x="244" y="330">0</text>
      <text x="341" y="376">1.0</text>
    </g>
    <text fontSize="16" transform="translate(167 318) rotate(24.500)">Y-光瞳（相对单位）</text>
    <text fontSize="16" transform="translate(176 236) rotate(-64)">X-光瞳（相对单位）</text>
    <text x="596" y="79" fontSize="14">波前函数</text>
    <rect x="596" y="91" width="26" height="210" fill="url(#rainbow)" />
    <g fontSize="14">
      {scale.map((s, i) => <text key={s} x="624" y={97 + i * 20.9}>{s}</text>)}
      <text x="623" y="329" fontSize="12">波</text>
    </g>
  </Scene>
);

const WavefrontWindow = () => (
  <Panel>
    <TitleBar $plot>
      <Glyph>{glyphs.airy}</Glyph>
      <Title>3: 波前图</Title>
    </TitleBar>
    <PlotToolbar auto />
    <PlotArea>
      <WavefrontScene />
      <Caption>
        <CaptionTitle $size={12}>波前函数</CaptionTitle>
        <CaptionLeft>
          <Line $size={11} $lh={13}>2025/8/6</Line>
          <Line $size={11} $lh={13}>1.0640 µm在0.0000 (度)</Line>
          <Line $size={11} $lh={13}>波峰到波谷 = 10.0129 波, RMS = 2.8778波.</Line>
          <Line $size={11} $lh={13}>面: 像面</Line>
          <Line $size={11} $lh={13}>出瞳直径: 5.8544E+01 毫米</Line>
        </CaptionLeft>
        <CaptionRight $rule>
          <Line $size={10} $lh={12}>Zemax</Line>
          <Line $size={10} $lh={12}>Ansys Zemax OpticStudio 2023 R1.00</Line>
        </CaptionRight>
        <CaptionRight>
          <Line $size={11} $lh={13}>Lens-3P_D25.4_2022.zmx</Line>
          <Line $size={11} $lh={13}>1的结构1</Line>
        </CaptionRight>
      </Caption>
    </PlotArea>
    <Tabs />
  </Panel>
);

export default function App() {
  return (
    <>
      <GlobalStyle />
      <SharedDefs aria-hidden="true">
        <defs>
          <radialGradient id="globeFill" cx=".35" cy=".3" r=".8">
            <stop offset="0" stopColor="#9fe0ff" />
            <stop offset=".5" stopColor="#2a7fd0" />
            <stop offset="1" stopColor="#123c86" />
          </radialGradient>
          <radialGradient id="helpFill" cx=".4" cy=".3" r=".8">
            <stop offset="0" stopColor="#6f97ea" />
            <stop offset="1" stopColor="#1a3ca8" />
          </radialGradient>
          <linearGradient id="swatchFill">
            <stop offset="0" stopColor="#fff" />
            <stop offset=".1" stopColor="#c9c9c9" />
            <stop offset="1" stopColor="#111" />
          </linearGradient>
        </defs>
      </SharedDefs>
      <Desktop>
        <Strip />
        <LensEditor />
        <FanWindow />
        <ModelWindow />
        <WavefrontWindow />
      </Desktop>
    </>
  );
}
